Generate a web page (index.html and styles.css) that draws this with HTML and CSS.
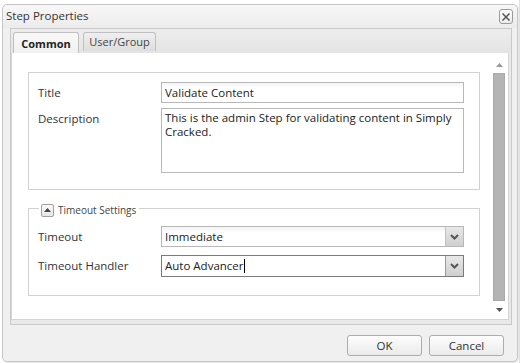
FILE: index.html
```html
<!DOCTYPE html>
<html>
<head>
<meta charset="utf-8">
<link rel="stylesheet" href="styles.css">
</head>
<body>
<div class="screen">
  <div class="dialog">
    <div class="header">
      <span class="title">Step Properties</span>
      <span class="close"><svg width="10" height="10" viewBox="0 0 10 10"><path d="M1.5 1.5 L8.5 8.5 M8.5 1.5 L1.5 8.5" stroke="#555" stroke-width="1.5" fill="none"/></svg></span>
    </div>
    <div class="panel">
      <div class="tabstrip">
        <div class="tab active">Common</div>
        <div class="tab user">User/Group</div>
      </div>
      <div class="content">
        <div class="form">
          <div class="fieldset first">
            <div class="row">
              <label class="label">Title</label>
              <div class="input">Validate Content</div>
            </div>
            <div class="row">
              <label class="label">Description</label>
              <div class="textarea">This is the admin Step for validating content in Simply Cracked.</div>
            </div>
          </div>
          <div class="fieldset second">
            <div class="legend">
              <span class="toggle"><svg width="7" height="4" viewBox="0 0 7 4"><path d="M0 4 L3.5 0 L7 4 Z" fill="#444"/></svg></span>
              <span class="legend-text">Timeout Settings</span>
            </div>
            <div class="row">
              <label class="label">Timeout</label>
              <div class="combo"><span class="combo-text">Immediate</span><span class="trigger"><svg width="9" height="6" viewBox="0 0 9 6"><path d="M1 1 L4.5 4.5 L8 1" stroke="#555" stroke-width="2" fill="none"/></svg></span></div>
            </div>
            <div class="row">
              <label class="label">Timeout Handler</label>
              <div class="combo focus"><span class="combo-text">Auto Advancer<span class="caret"></span></span><span class="trigger"><svg width="9" height="6" viewBox="0 0 9 6"><path d="M1 1 L4.5 4.5 L8 1" stroke="#555" stroke-width="2" fill="none"/></svg></span></div>
            </div>
          </div>
        </div>
        <div class="scrollbar">
          <div class="sb-btn"><svg width="7" height="4" viewBox="0 0 7 4"><path d="M0 4 L3.5 0 L7 4 Z" fill="#9a9a9a"/></svg></div>
          <div class="thumb"></div>
          <div class="sb-btn"><svg width="7" height="4" viewBox="0 0 7 4"><path d="M0 0 L3.5 4 L7 0 Z" fill="#555"/></svg></div>
        </div>
      </div>
    </div>
    <div class="footer">
      <button class="btn">OK</button>
      <button class="btn">Cancel</button>
    </div>
  </div>
  <div class="edge"></div>
</div>
</body>
</html>
```

FILE: styles.css
```css
html, body {
  margin: 0;
  padding: 0;
  background: #ffffff;
}
body {
  font-family: "Open Sans", "Noto Sans", sans-serif;
  font-size: 11px;
  color: #333;
}
.screen {
  display: flex;
  width: 522px;
  height: 363px;
  overflow: hidden;
}
.dialog {
  margin: 4px 0 0 2px;
  width: 516px;
  height: 358px;
  box-sizing: border-box;
  border: 1px solid #c6c6c6;
  border-radius: 5px;
  background: #f0f0f0;
  display: flex;
  flex-direction: column;
  box-shadow: 1px 1px 2px rgba(0,0,0,0.12);
}
.header {
  height: 23px;
  display: flex;
  align-items: center;
  justify-content: space-between;
  padding: 0 4px 0 3px;
  background: linear-gradient(#f7f7f7, #ececec);
  border-radius: 5px 5px 0 0;
}
.title {
  font-size: 11.5px;
  color: #333;
  margin-top: -2px;
}
.close {
  width: 12px;
  height: 13px;
  border: 1px solid #9a9a9a;
  border-radius: 3px;
  background: linear-gradient(#fdfdfd, #ececec);
  display: flex;
  align-items: center;
  justify-content: center;
  margin-top: 0;
}
.panel {
  margin: 0 5px 0 7px;
  height: 295px;
  border: 1px solid #c9c9c9;
  display: flex;
  flex-direction: column;
  background: #e9e9e9;
}
.tabstrip {
  height: 24px;
  display: flex;
  align-items: flex-end;
  gap: 4px;
  padding-left: 2px;
  background: linear-gradient(#ededed, #e4e4e4);
}
.tab {
  height: 19px;
  width: 73px;
  box-sizing: border-box;
  text-align: center;
  border: 1px solid #c0c0c0;
  border-bottom: none;
  border-radius: 3px 3px 0 0;
  background: linear-gradient(#efefef, #dedede);
  color: #444;
  font-size: 11px;
  line-height: 18px;
  margin-bottom: 2px;
}
.tab.active {
  height: 21px;
  width: 66px;
  margin-bottom: 0;
  background: linear-gradient(#f8f8f8, #f1f1f1);
  font-weight: bold;
  color: #222;
  line-height: 21px;
}
.content {
  flex: 1;
  background: #ffffff;
  border: 1px solid #d4d4d4;
  border-top: none;
  margin: 0 2px 4px 0;
  display: flex;
}
.form {
  flex: 1;
  padding: 19px 0 0 16px;
}
.fieldset {
  width: 452px;
  box-sizing: border-box;
  border: 1px solid #d2d2d2;
  position: relative;
}
.fieldset.first {
  height: 118px;
  padding: 9px 15px 0 9px;
}
.fieldset.second {
  margin-top: 18px;
  height: 88px;
  padding: 17px 15px 0 9px;
}
.row {
  display: flex;
  margin-bottom: 5px;
}
.fieldset.second .row {
  margin-bottom: 8px;
}
.label {
  width: 123px;
  flex: none;
  font-size: 11.5px;
  color: #333;
  line-height: 21px;
}
.input, .textarea, .combo {
  width: 303px;
  box-sizing: border-box;
  border: 1px solid #b8b8b8;
  background: linear-gradient(#f4f4f4, #ffffff 5px);
  color: #222;
  font-size: 11.5px;
  padding: 0 3px;
}
.input {
  height: 21px;
  line-height: 20px;
}
.textarea {
  height: 65px;
  line-height: 14px;
  padding-top: 2px;
  background: #fff;
}
.combo {
  height: 21px;
  display: flex;
  padding: 0 0 0 3px;
  background: linear-gradient(#f3f3f3, #ffffff 6px);
}
.combo.focus {
  height: 22px;
  border-color: #7a7a7a;
  background: #fff;
}
.combo-text {
  flex: 1;
  line-height: 20px;
}
.caret {
  display: inline-block;
  width: 1px;
  height: 14px;
  background: #000;
  vertical-align: -3px;
}
.trigger {
  width: 17px;
  border-left: 1px solid #c2c2c2;
  background: linear-gradient(#e8e8e8, #cfcfcf);
  display: flex;
  align-items: center;
  justify-content: center;
}
.combo.focus .trigger {
  border-left-color: #9a9a9a;
}
.legend {
  position: absolute;
  top: -6px;
  left: 10px;
  background: #fff;
  display: flex;
  align-items: center;
  gap: 4px;
  padding: 0 3px 0 2px;
}
.toggle {
  width: 11px;
  height: 11px;
  border: 1px solid #a0a0a0;
  border-radius: 2px;
  background: linear-gradient(#fafafa, #e6e6e6);
  display: flex;
  align-items: center;
  justify-content: center;
}
.legend-text {
  font-size: 10px;
  color: #444;
}
.scrollbar {
  width: 14px;
  margin: 3px 2px 1px 0;
  display: flex;
  flex-direction: column;
}
.sb-btn {
  height: 17px;
  display: flex;
  align-items: center;
  justify-content: center;
}
.thumb {
  flex: 1;
  background: #b4b4b4;
  border: 1px solid #a9a9a9;
  margin: 0 1px;
}
.footer {
  flex: 1;
  display: flex;
  justify-content: flex-end;
  gap: 7px;
  padding: 10px 13px 0 0;
}
.btn {
  height: 21px;
  width: 75px;
  border: 1px solid #adadad;
  border-radius: 3px;
  background: linear-gradient(#fdfdfd, #ebebeb);
  font-family: "Open Sans", "Noto Sans", sans-serif;
  font-size: 11.5px;
  color: #333;
  padding: 0;
}
.edge {
  flex: 1;
  border-left: 1px solid #e0e0e0;
  margin-left: 1px;
}
```
